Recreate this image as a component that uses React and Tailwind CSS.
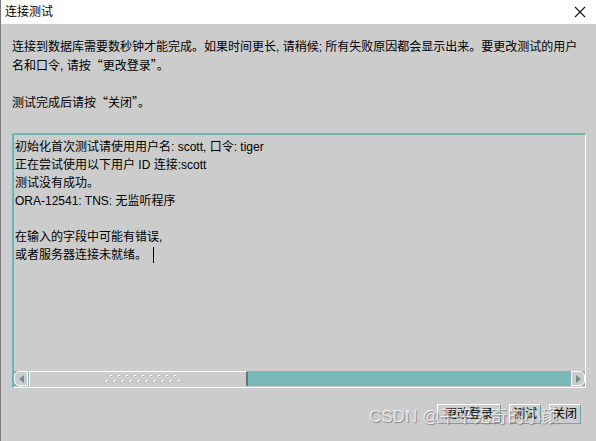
import React from 'react';

const font = { fontFamily: '"Liberation Sans", "Noto Sans CJK SC", sans-serif' };
const cjk = { fontFamily: '"Noto Sans CJK SC", sans-serif' };

const Grip = () => {
  const row1 = Array.from({ length: 9 }, (_, i) => 4 + i * 8);
  const row2 = Array.from({ length: 10 }, (_, i) => i * 8);
  return (
    <svg width="76" height="8" viewBox="0 0 76 8" shapeRendering="crispEdges">
      {row1.map((x) => (
        <g key={'a' + x}>
          <rect x={x} y={0} width="2" height="2" fill="#ffffff" />
          <rect x={x + 1} y={1} width="1" height="1" fill="#6fb3b0" />
        </g>
      ))}
      {row2.map((x) => (
        <g key={'b' + x}>
          <rect x={x} y={5} width="2" height="2" fill="#ffffff" />
          <rect x={x + 1} y={6} width="1" height="1" fill="#6fb3b0" />
        </g>
      ))}
    </svg>
  );
};

const Btn = ({ children, w }) => (
  <button className={`h-[20px] ${w} bg-[#cccccc] border border-t-white border-l-white border-r-[#6aa8a5] border-b-[#6aa8a5] text-[12px] text-black leading-none flex items-center justify-center`}>
    {children}
  </button>
);

export default function App() {
  return (
    <div className="w-[596px] h-[441px] flex flex-col bg-[#cccccc] border-l border-[#7a7a7a] relative overflow-hidden text-black" style={font}>
      {/* title bar */}
      <div className="h-[24px] bg-white flex items-center justify-between pl-[4px] pr-[10px]">
        <span className="text-[12px]">连接测试</span>
        <svg width="12" height="12" viewBox="0 0 12 12">
          <path d="M1 1 L11 11 M11 1 L1 11" stroke="#111" strokeWidth="1.1" />
        </svg>
      </div>

      <div className="flex-1 flex flex-col pl-[11px] pr-[10px] pt-[14px]">
        <div className="text-[12px] leading-[18px] h-[95px]">
          连接到数据库需要数秒钟才能完成。如果时间更长, 请稍候; 所有失败原因都会显示出来。要更改测试的用户
          <br />
          名和口令, 请按<span style={cjk}>“</span>更改登录<span style={cjk}>”</span>。
          <br />
          <br />
          测试完成后请按<span style={cjk}>“</span>关闭<span style={cjk}>”</span>。
        </div>

        {/* text area */}
        <div className="h-[255px] w-[574px] flex flex-col border-t-2 border-l-2 border-[#6fb3b0] border-r border-b border-r-white border-b-white rounded-tl-[2px]">
          <div className="flex-1 pl-[1px] pt-[3px] text-[12px] leading-[18px]">
            初始化首次测试请使用用户名: scott, 口令: tiger
            <br />
            正在尝试使用以下用户 ID 连接:scott
            <br />
            测试没有成功。
            <br />
            ORA-12541: TNS: 无监听程序
            <br />
            <br />
            在输入的字段中可能有错误,
            <br />
            <span className="inline-flex items-center">
              或者服务器连接未就绪。
              <span className="inline-block w-[1px] h-[16px] bg-black ml-[6px]" />
            </span>
          </div>

          {/* horizontal scrollbar */}
          <div className="h-[15px] bg-[#78b9b7] flex items-stretch mb-[1px]">
            <div className="w-[14px] bg-[#cccccc] border border-white rounded-l-[5px] flex items-center justify-center">
              <svg width="5" height="8" viewBox="0 0 5 8">
                <path d="M5 0 L0 4 L5 8 Z" fill="#6f8f8e" />
              </svg>
            </div>
            <div className="w-[219px] ml-[1px] bg-[#cccccc] border-t border-l border-white border-r-2 border-r-[#707070] flex items-center justify-center pl-[12px]">
              <Grip />
            </div>
            <div className="flex-1" />
            <div className="w-[14px] bg-[#cccccc] border border-white rounded-r-[5px] flex items-center justify-center">
              <svg width="5" height="8" viewBox="0 0 5 8">
                <path d="M0 0 L5 4 L0 8 Z" fill="#6f8f8e" />
              </svg>
            </div>
          </div>
        </div>

        {/* buttons */}
        <div className="flex justify-end gap-[8px] mt-[16px] pr-[5px]">
          <Btn w="w-[64px]">更改登录</Btn>
          <Btn w="w-[32px]">测试</Btn>
          <Btn w="w-[32px]">关闭</Btn>
        </div>
      </div>

      {/* watermark */}
      <div
        className="absolute left-[368px] top-[405px] text-[17px] leading-[24px] text-white/70 whitespace-nowrap pointer-events-none"
        style={{ textShadow: '1px 1px 1px rgba(90,90,90,0.6)' }}
      >
        CSDN @平平无奇的小颜
      </div>
    </div>
  );
}
